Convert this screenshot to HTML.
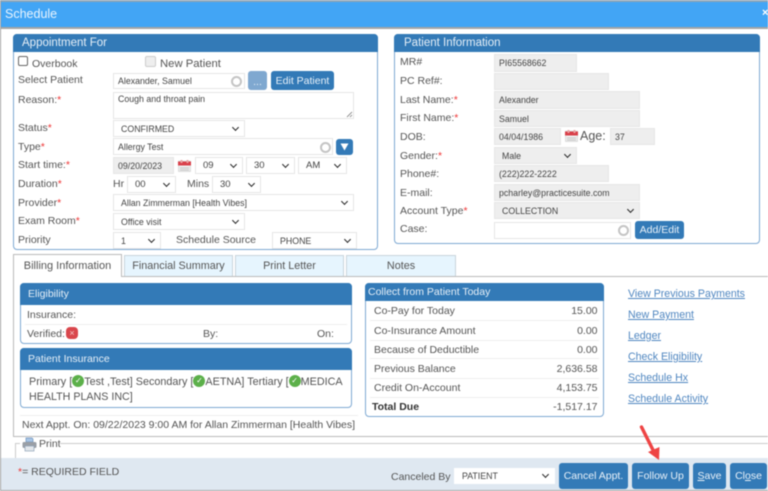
<!DOCTYPE html>
<html><head><meta charset="utf-8">
<style>
html,body{margin:0;padding:0;background:#fff}
#p{position:relative;width:768px;height:491px;overflow:hidden;background:#fff;font-family:"Liberation Sans",sans-serif;color:#555;filter:blur(0.45px)}
#p div,#p span.a,#p svg{position:absolute}
.r{background:#337ab7}
.l{font-size:10.5px;line-height:14px;height:14px;white-space:nowrap;color:#555;margin-top:1px}
.l b{color:#e33;font-weight:normal}
.f{box-sizing:border-box;border:1px solid #e6e6e6;background:#fff;font-size:8.8px;color:#444;white-space:nowrap;padding-left:4px;display:flex;align-items:center}
.g{background:#eee}
.s{padding-left:7px}
.s:after{content:"";position:absolute;right:6px;top:50%;width:4px;height:4px;margin-top:-4px;border:solid #222;border-width:0 1.5px 1.5px 0;transform:rotate(45deg)}
.c{width:11px;height:11px;border:2px solid #c4c4c4;border-radius:50%;box-sizing:border-box}
.b{background:#337ab7;color:#e8f1f9;font-size:10.5px;border-radius:3px;text-align:center;white-space:nowrap}
.pn{box-sizing:border-box;border:1px solid #7ea9d3;border-radius:4px;background:#fff}
.h{background:#337ab7;color:#e6eff7;font-size:10.5px;white-space:nowrap;box-sizing:border-box}
.ln{height:1px;background:#eee}
.k{font-size:10.5px;line-height:14px;white-space:nowrap;color:#555;margin-top:1px}
.v{font-size:10.5px;line-height:14px;white-space:nowrap;color:#555;text-align:right;width:80px;left:517.5px;margin-top:1px}
.u{font-size:10.6px;line-height:14px;left:628px;color:#4f86c0;text-decoration:underline;white-space:nowrap}
.tab{box-sizing:border-box;background:#e6f5fe;border:1px solid #c9d5dc;border-bottom:none;font-size:10.8px;text-align:center;color:#555;top:255px;height:21px;line-height:20px;white-space:nowrap}
.ok{display:inline-block;overflow:hidden;width:12px;height:12px;border-radius:50%;background:#5cb04a;vertical-align:-2px;position:relative;color:#fff;font-size:8px;line-height:12px;text-align:center}
</style></head>
<body><div id="p">
<div style="left:0;top:0;width:768px;height:2px;background:#8fa6b8"></div>
<div style="left:0;top:0;width:1px;height:491px;background:#a0a0a0"></div>
<div style="left:1px;top:2px;width:767px;height:26px;background:#42a5f5"></div>
<div style="left:1px;top:27px;width:767px;height:2px;background:#a5a5a5"></div>
<div style="left:5px;top:6px;font-size:12.5px;line-height:16px;color:#e8f4fe">Schedule</div>
<div style="left:762px;top:6px;font-size:11px;line-height:14px;color:#fff;font-weight:bold">×</div>

<!-- Appointment For -->
<div class="pn" style="left:13px;top:34px;width:365px;height:216px"></div>
<div class="h" style="left:13px;top:34px;width:365px;height:18px;border-radius:4px 4px 0 0;padding-left:9px;font-size:11.5px;line-height:19px">Appointment For</div>
<div style="left:18px;top:56px;width:8px;height:8px;border:1px solid #666;border-radius:2px"></div>
<div class="l" style="left:32px;top:56px">Overbook</div>
<div style="left:145px;top:56px;width:9px;height:9px;border:1px solid #ccc;border-radius:2px;background:#eee"></div>
<div class="l" style="left:160px;top:56px;font-size:11.3px">New Patient</div>
<div class="l" style="left:18px;top:72px">Select Patient</div>
<div class="f" style="left:113px;top:73px;width:132px;height:16px">Alexander, Samuel</div>
<div class="c" style="left:231px;top:76px"></div>
<div class="b" style="left:248px;top:71px;width:19px;height:19px;line-height:23px;background:#7fa8d0">...</div>
<div class="b" style="left:271px;top:71px;width:63px;height:19px;line-height:20px">Edit Patient</div>
<div class="l" style="left:18px;top:92px">Reason:<b>*</b></div>
<div class="f" style="left:113px;top:92px;width:241px;height:27px;align-items:flex-start;padding-top:1px">Cough and throat pain</div>
<svg style="left:346px;top:111px" width="7" height="7"><path d="M1 6L6 1M4 6L6 4" stroke="#777" stroke-width="0.8"/></svg>
<div class="l" style="left:18px;top:120px">Status<b>*</b></div>
<div class="f s" style="left:113px;top:120px;width:132px;height:17px">CONFIRMED</div>
<div class="l" style="left:18px;top:139px">Type<b>*</b></div>
<div class="f" style="left:113px;top:138px;width:220px;height:17px">Allergy Test</div>
<div class="c" style="left:320px;top:142px"></div>
<div class="b" style="left:336px;top:139px;width:17px;height:16px"></div>
<svg style="left:340px;top:143px" width="9" height="8"><path d="M0.5 0.5H8.5L4.5 7.5Z" fill="#fff"/></svg>
<div class="l" style="left:18px;top:157px">Start time:<b>*</b></div>
<div class="f g" style="left:113px;top:157px;width:61px;height:17px">09/20/2023</div>
<svg style="left:178px;top:160px" width="13" height="12"><rect x="0.5" y="1" width="12" height="10.5" fill="#eee" stroke="#ccc" stroke-width=".6"/><rect x="0" y="1.5" width="13" height="4" fill="#d9404a"/><rect x="2.5" y="0" width="2" height="3" fill="#e9a3a3"/><rect x="8.5" y="0" width="2" height="3" fill="#e9a3a3"/><path d="M2 8H11M2 10H11" stroke="#bbb" stroke-width=".7"/></svg>
<div class="f s" style="left:195px;top:157px;width:48px;height:17px;font-size:9.5px">09</div>
<div class="f s" style="left:246px;top:157px;width:49px;height:17px;font-size:9.5px">30</div>
<div class="f s" style="left:298px;top:157px;width:49px;height:17px;font-size:9.5px">AM</div>
<div class="l" style="left:18px;top:176px">Duration<b>*</b></div>
<div class="l" style="left:113px;top:176px">Hr</div>
<div class="f s" style="left:127px;top:176px;width:49px;height:17px;font-size:9.5px">00</div>
<div class="l" style="left:187px;top:176px">Mins</div>
<div class="f s" style="left:212px;top:176px;width:49px;height:17px;font-size:9.5px">30</div>
<div class="l" style="left:18px;top:195px">Provider<b>*</b></div>
<div class="f s" style="left:113px;top:194px;width:241px;height:17px">Allan Zimmerman [Health Vibes]</div>
<div class="l" style="left:18px;top:213px">Exam Room<b>*</b></div>
<div class="f s" style="left:113px;top:213px;width:132px;height:17px">Office visit</div>
<div class="l" style="left:18px;top:232px">Priority</div>
<div class="f s" style="left:113px;top:232px;width:48px;height:17px">1</div>
<div class="l" style="left:176px;top:232px">Schedule Source</div>
<div class="f s" style="left:272px;top:232px;width:85px;height:17px">PHONE</div>

<!-- Patient Information -->
<div class="pn" style="left:394px;top:34px;width:366px;height:210px"></div>
<div class="h" style="left:394px;top:34px;width:366px;height:18px;border-radius:4px 4px 0 0;padding-left:10px;font-size:11.5px;line-height:19px">Patient Information</div>
<div class="l" style="left:400px;top:54px">MR#</div>
<div class="f g" style="left:494px;top:54px;width:83px;height:18px">PI65568662</div>
<div class="l" style="left:400px;top:73px">PC Ref#:</div>
<div class="f g" style="left:494px;top:73px;width:115px;height:17px"></div>
<div class="l" style="left:400px;top:92px">Last Name:<b>*</b></div>
<div class="f g" style="left:494px;top:91px;width:146px;height:18px">Alexander</div>
<div class="l" style="left:400px;top:110px">First Name:<b>*</b></div>
<div class="f g" style="left:494px;top:110px;width:146px;height:17px">Samuel</div>
<div class="l" style="left:400px;top:129px">DOB:</div>
<div class="f g" style="left:494px;top:128px;width:67px;height:17px">04/04/1986</div>
<svg style="left:565px;top:130px" width="13" height="12"><rect x="0.5" y="1" width="12" height="10.5" fill="#eee" stroke="#ccc" stroke-width=".6"/><rect x="0" y="1.5" width="13" height="4" fill="#d9404a"/><rect x="2.5" y="0" width="2" height="3" fill="#e9a3a3"/><rect x="8.5" y="0" width="2" height="3" fill="#e9a3a3"/><path d="M2 8H11M2 10H11" stroke="#bbb" stroke-width=".7"/></svg>
<div class="l" style="left:580px;top:128px;font-size:12.5px">Age:</div>
<div class="f g" style="left:610px;top:128px;width:45px;height:17px">37</div>
<div class="l" style="left:400px;top:148px">Gender:<b>*</b></div>
<div class="f g s" style="left:494px;top:147px;width:83px;height:17px">Male</div>
<div class="l" style="left:400px;top:166px">Phone#:</div>
<div class="f g" style="left:494px;top:165px;width:115px;height:17px">(222)222-2222</div>
<div class="l" style="left:400px;top:185px">E-mail:</div>
<div class="f g" style="left:494px;top:184px;width:146px;height:17px">pcharley@practicesuite.com</div>
<div class="l" style="left:400px;top:203px">Account Type<b>*</b></div>
<div class="f g s" style="left:494px;top:202px;width:146px;height:17px">COLLECTION</div>
<div class="l" style="left:400px;top:221px">Case:</div>
<div class="f" style="left:494px;top:222px;width:137px;height:17px"></div>
<div class="c" style="left:618px;top:225px"></div>
<div class="b" style="left:635px;top:221px;width:49px;height:18px;line-height:19px">Add/Edit</div>

<!-- Tabs -->
<div style="left:13px;top:276px;width:755px;height:1px;background:#bbb"></div>
<div style="left:13px;top:276px;width:1px;height:161px;background:#bbb"></div>
<div style="left:13px;top:436px;width:755px;height:1px;background:#bbb"></div>
<div style="left:13px;top:254px;width:109px;height:23px;box-sizing:border-box;background:#fff;border:1px solid #bbb;border-bottom:none;font-size:11px;line-height:22px;text-align:center;color:#555">Billing Information</div>
<div class="tab" style="left:124px;width:109px">Financial Summary</div>
<div class="tab" style="left:235px;width:109px">Print Letter</div>
<div class="tab" style="left:346px;width:110px">Notes</div>

<!-- Eligibility -->
<div class="pn" style="left:20px;top:283px;width:332px;height:61px"></div>
<div class="h" style="left:20px;top:283px;width:332px;height:22px;border-radius:4px 4px 0 0;padding-left:8px;line-height:23px">Eligibility</div>
<div class="k" style="left:27px;top:307px">Insurance:</div>
<div class="ln" style="left:25px;top:324px;width:322px"></div>
<div class="k" style="left:27px;top:326px">Verified:</div>
<div style="left:66px;top:327px;width:12px;height:12px;border-radius:4px;background:#d9464c;color:#f5c6c6;font-size:9px;line-height:12px;text-align:center">×</div>
<div class="k" style="left:203px;top:326px">By:</div>
<div class="k" style="left:317px;top:326px">On:</div>

<!-- Patient Insurance -->
<div class="pn" style="left:20px;top:348px;width:332px;height:60px"></div>
<div class="h" style="left:20px;top:348px;width:332px;height:22px;border-radius:4px 4px 0 0;padding-left:8px;line-height:23px">Patient Insurance</div>
<div class="k" style="left:29px;top:374px;font-size:10.8px">Primary [<span class="ok">✓</span>Test ,Test] Secondary [<span class="ok">✓</span>AETNA] Tertiary [<span class="ok">✓</span>MEDICA</div>
<div class="k" style="left:29px;top:389px;font-size:10.7px">HEALTH PLANS INC]</div>
<div class="ln" style="left:20px;top:415px;width:338px"></div>
<div class="k" style="left:22px;top:417px;font-size:10.5px">Next Appt. On: 09/22/2023 9:00 AM for Allan Zimmerman [Health Vibes]</div>

<!-- Collect -->
<div class="pn" style="left:365px;top:283px;width:239px;height:134px"></div>
<div class="h" style="left:365px;top:283px;width:239px;height:18px;border-radius:4px 4px 0 0;padding-left:3px;line-height:18px">Collect from Patient Today</div>
<div class="k" style="left:374px;top:303px">Co-Pay for Today</div><div class="v" style="top:303px">15.00</div>
<div class="ln" style="left:370px;top:320px;width:229px"></div>
<div class="k" style="left:374px;top:323px">Co-Insurance Amount</div><div class="v" style="top:323px">0.00</div>
<div class="ln" style="left:370px;top:340px;width:229px"></div>
<div class="k" style="left:374px;top:342px">Because of Deductible</div><div class="v" style="top:342px">0.00</div>
<div class="ln" style="left:370px;top:358px;width:229px"></div>
<div class="k" style="left:374px;top:361px">Previous Balance</div><div class="v" style="top:361px">2,636.58</div>
<div class="ln" style="left:370px;top:378px;width:229px"></div>
<div class="k" style="left:374px;top:380px">Credit On-Account</div><div class="v" style="top:380px">4,153.75</div>
<div class="ln" style="left:370px;top:397px;width:229px"></div>
<div class="k" style="left:372px;top:399px;font-weight:bold;color:#333">Total Due</div><div class="v" style="top:399px">-1,517.17</div>

<div class="u" style="top:287px">View Previous Payments</div>
<div class="u" style="top:308px">New Payment</div>
<div class="u" style="top:329px">Ledger</div>
<div class="u" style="top:350px">Check Eligibility</div>
<div class="u" style="top:371px">Schedule Hx</div>
<div class="u" style="top:392px">Schedule Activity</div>

<!-- Print -->
<div style="left:15px;top:443px;width:753px;height:1px;background:#ccc"></div>
<div style="left:15px;top:443px;width:1px;height:15px;background:#ccc"></div>
<div style="left:20px;top:437px;width:40px;height:14px;background:#fff"></div>
<svg style="left:22px;top:437px" width="15" height="15"><path d="M4 5V1H10L11 2V5Z" fill="#a9c6e6" stroke="#6d93bd" stroke-width=".7"/><rect x="0.5" y="5" width="14" height="6" rx="1.5" fill="#9a9fa6"/><rect x="3" y="9" width="9" height="5" fill="#e3e7ec" stroke="#8fa3b8" stroke-width=".7"/></svg>
<div class="l" style="left:39px;top:436px">Print</div>

<!-- Footer -->
<div style="left:1px;top:458px;width:767px;height:32px;background:#dfe8f1"></div>
<div style="left:0;top:490px;width:768px;height:1px;background:#a5a5a5"></div>
<div class="l" style="left:18px;top:464px"><b>*</b>= REQUIRED FIELD</div>
<div class="l" style="left:391px;top:469px">Canceled By</div>
<div class="f s" style="left:454px;top:468px;width:101px;height:16px;border-color:#fff">PATIENT</div>
<div class="b" style="left:559px;top:463px;width:69px;height:26px;line-height:26px">Cancel Appt.</div>
<div class="b" style="left:632px;top:463px;width:57px;height:26px;line-height:26px">Follow Up</div>
<div class="b" style="left:693px;top:463px;width:33px;height:26px;line-height:26px"><u>S</u>ave</div>
<div class="b" style="left:730px;top:463px;width:37px;height:26px;line-height:26px">Cl<u>o</u>se</div>

<!-- Arrow -->
<svg style="left:630px;top:420px" width="40" height="45"><path d="M11.5 7L23 30" stroke="#ee4444" stroke-width="3.4" stroke-linecap="round"/><path d="M18 32L29.5 27L29 40Z" fill="#ee4444"/></svg>
</div></body></html>
